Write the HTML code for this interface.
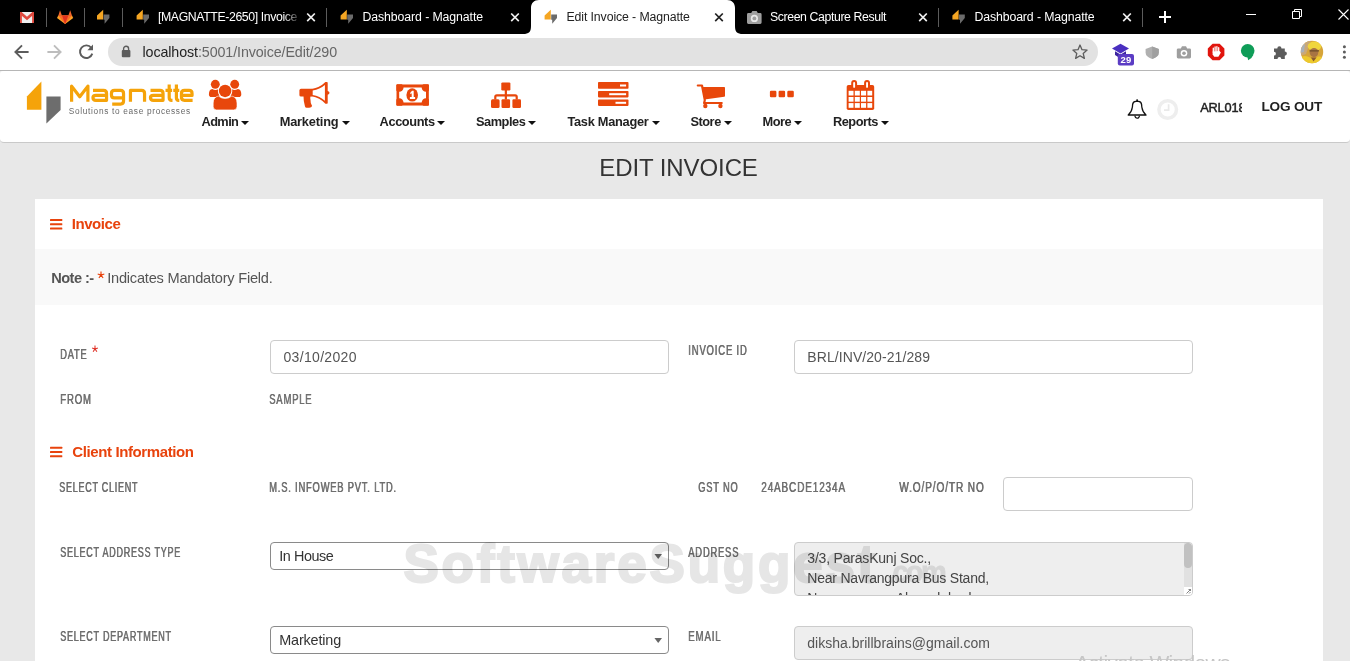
<!DOCTYPE html>
<html><head><meta charset="utf-8">
<style>
*{box-sizing:border-box;margin:0;padding:0}
html,body{width:1350px;height:661px;overflow:hidden;background:#e8e8e8;font-family:"Liberation Sans",sans-serif;}
.a{position:absolute}
.t{position:absolute;white-space:pre;line-height:20px;height:20px;transform-origin:0 50%}
svg{position:absolute;overflow:visible}
#tabbar{position:absolute;left:0;top:0;width:1350px;height:34px;background:#000}
#toolbar{position:absolute;left:0;top:34px;width:1350px;height:37px;background:#fff;border-bottom:1px solid #b6b6b6}
#omni{position:absolute;left:108px;top:38px;width:990px;height:28px;border-radius:14px;background:#e2e2e2}
#nav{position:absolute;left:0;top:71px;width:1350px;height:72px;background:#fff;border-bottom:1px solid #c9c9c9;border-radius:3px 3px 4px 4px}
.sep{position:absolute;top:8px;width:1px;height:19px;background:#5a5a5a}
.car{position:absolute;top:121px;width:0;height:0;border-left:4px solid transparent;border-right:4px solid transparent;border-top:4px solid #111}
#card{position:absolute;left:35px;top:199px;width:1288px;height:470px;background:#fff}
#note{position:absolute;left:35px;top:249px;width:1288px;height:56px;background:#f9f9f9}
.inp{position:absolute;height:34px;border:1px solid #ccc;border-radius:4px;background:#fff}
.sel{position:absolute;height:28px;border:1px solid #8a8a8a;border-radius:4px;background:#fff}
.sel:after{content:"";position:absolute;right:6px;top:11px;width:7.600px;height:5px;background:#666;clip-path:polygon(0 0,100% 0,50% 100%)}
</style></head><body>
<div id="tabbar"></div>
<!--TABS-->
<svg style="left:0;top:0" width="1350" height="34" viewBox="0 0 1350 34">
 <defs>
 </defs>
 <!-- active tab -->
 <path d="M523 34 C529 34 531 32 531 26 L531 8 C531 3 534 0 539 0 L727 0 C732 0 735 3 735 8 L735 26 C735 32 737 34 743 34 Z" fill="#fff"/>
 <!-- separators -->
 <g fill="#5c5c5c"><rect x="46" y="8" width="1" height="19"/><rect x="84" y="8" width="1" height="19"/><rect x="122" y="8" width="1" height="19"/><rect x="326" y="8" width="1" height="19"/><rect x="938" y="8" width="1" height="19"/><rect x="1142" y="8" width="1" height="19"/></g>
 <!-- gmail -->
 <g>
  <rect x="20" y="12" width="14" height="11" fill="#f1f1f1"/>
  <path d="M20 12 L21.600 12 L27 16.700 L32.400 12 L34 12 L34 14.200 L27 20.300 L20 14.200Z" fill="#e04a3f"/>
  <rect x="20" y="12" width="1.900" height="11" fill="#e04a3f"/><rect x="32.100" y="12" width="1.900" height="11" fill="#e04a3f"/>
 </g>
 <!-- gitlab -->
 <g>
  <path d="M65.100 24.100 L57 18 L58.300 15.600 L72 15.600 L73.200 18Z" fill="#fca326"/>
  <path d="M65.100 24.100 L58.300 15.600 L72 15.600Z" fill="#fc6d26"/>
  <path d="M65.100 24.100 L62 15.600 L68.300 15.600Z" fill="#e2331f"/>
  <path d="M58.300 15.800 L60 10.200 L62 15.800Z M68.300 15.800 L70.200 10.200 L72 15.800Z" fill="#f2652a"/>
 </g>
 <g transform="translate(97 9.8)"><path d="M0 5.6 L6.2 0 L6.2 9.6 L0 9.6Z" fill="#f5a623"/><path d="M6.6 4.8 L12.4 4.8 L12.4 8.2 L7.6 13.9 L7.6 9.9 L6.6 9.9Z" fill="#6b6b6b"/></g>
 <g transform="translate(136.6 9.8)"><path d="M0 5.6 L6.2 0 L6.2 9.6 L0 9.6Z" fill="#f5a623"/><path d="M6.6 4.8 L12.4 4.8 L12.4 8.2 L7.6 13.9 L7.6 9.9 L6.6 9.9Z" fill="#6b6b6b"/></g>
 <g transform="translate(340.6 9.8)"><path d="M0 5.6 L6.2 0 L6.2 9.6 L0 9.6Z" fill="#f5a623"/><path d="M6.6 4.8 L12.4 4.8 L12.4 8.2 L7.6 13.9 L7.6 9.9 L6.6 9.9Z" fill="#6b6b6b"/></g>
 <g transform="translate(544.6 9.8)"><path d="M0 5.6 L6.2 0 L6.2 9.6 L0 9.6Z" fill="#f5a623"/><path d="M6.6 4.8 L12.4 4.8 L12.4 8.2 L7.6 13.9 L7.6 9.9 L6.6 9.9Z" fill="#6b6b6b"/></g>
 <g transform="translate(952.4 9.8)"><path d="M0 5.6 L6.2 0 L6.2 9.6 L0 9.6Z" fill="#f5a623"/><path d="M6.6 4.8 L12.4 4.8 L12.4 8.2 L7.6 13.9 L7.6 9.9 L6.6 9.9Z" fill="#6b6b6b"/></g>
 <!-- camera favicon -->
 <g fill="#9e9e9e"><path d="M748.4 13 L751.2 13 L752.4 11 L756.6 11 L757.8 13 L760.2 13 Q761.6 13 761.6 14.4 L761.6 22.6 Q761.6 24 760.2 24 L748.4 24 Q747 24 747 22.6 L747 14.4 Q747 13 748.4 13Z"/></g>
 <circle cx="754.4" cy="18.4" r="3.6" fill="#e8e8e8"/><circle cx="754.4" cy="18.4" r="1.9" fill="#9e9e9e"/>
 <!-- close buttons -->
 <g transform="translate(311 17.3)" stroke="#f0f0f0"><path d="M-3.8 -3.8 L3.8 3.8 M3.8 -3.8 L-3.8 3.8" stroke-width="1.7" fill="none"/></g>
 <g transform="translate(515 17.3)" stroke="#f0f0f0"><path d="M-3.8 -3.8 L3.8 3.8 M3.8 -3.8 L-3.8 3.8" stroke-width="1.7" fill="none"/></g>
 <g transform="translate(719 17.3)" stroke="#222"><path d="M-3.8 -3.8 L3.8 3.8 M3.8 -3.8 L-3.8 3.8" stroke-width="1.7" fill="none"/></g>
 <g transform="translate(923 17.3)" stroke="#f0f0f0"><path d="M-3.8 -3.8 L3.8 3.8 M3.8 -3.8 L-3.8 3.8" stroke-width="1.7" fill="none"/></g>
 <g transform="translate(1127 17.3)" stroke="#f0f0f0"><path d="M-3.8 -3.8 L3.8 3.8 M3.8 -3.8 L-3.8 3.8" stroke-width="1.7" fill="none"/></g>
 <!-- plus -->
 <path d="M1159 17 L1171 17 M1165 11 L1165 23" stroke="#fff" stroke-width="2"/>
 <!-- window controls -->
 <path d="M1246 14.5 L1256 14.5" stroke="#fff" stroke-width="1"/>
 <path d="M1292.5 11.5 L1299.500 11.5 L1299.5 18.5 L1292.5 18.5Z M1294.5 11.5 L1294.5 9.5 L1301.5 9.5 L1301.5 16.5 L1299.5 16.5" stroke="#fff" stroke-width="1" fill="none"/>
 <path d="M1338.5 9.5 L1348.5 19.5 M1348.500 9.5 L1338.5 19.5" stroke="#fff" stroke-width="1.1"/>
 <!-- fade on truncated tab title -->
 <rect x="280" y="8" width="18" height="18" fill="url(#fd)"/>
 <linearGradient id="fd" x1="0" x2="1" y1="0" y2="0"><stop offset="0" stop-color="#000" stop-opacity="0"/><stop offset="1" stop-color="#000" stop-opacity="0.75"/></linearGradient>
</svg>
<!--/TABS-->
<div id="toolbar"></div>
<div id="omni"></div>
<!--TOOLBAR-->
<svg style="left:0;top:34px" width="1350" height="37" viewBox="0 34 1350 37">
 <!-- back -->
 <path d="M28.6 52 L16 52 M22 45.4 L15.4 52 L22 58.6" stroke="#5c5c5c" stroke-width="1.9" fill="none"/>
 <!-- forward -->
 <path d="M47.4 52 L60 52 M54 45.4 L60.6 52 L54 58.600" stroke="#bdbdbd" stroke-width="1.9" fill="none"/>
 <!-- reload -->
 <path d="M91.3 47.8 A6.3 6.3 0 1 0 92.3 53.600" stroke="#5c5c5c" stroke-width="1.9" fill="none"/>
 <path d="M93 44.6 L93 50.2 L87.4 50.2Z" fill="#5c5c5c"/>
 <!-- lock -->
 <rect x="121.8" y="50" width="8.6" height="7.2" rx="1" fill="#5c5c5c"/>
 <path d="M123.600 50.5 L123.600 48.8 A2.5 2.5 0 0 1 128.6 48.8 L128.6 50.5" stroke="#5c5c5c" stroke-width="1.4" fill="none"/>
 <!-- star -->
 <path d="M1080 45 L1082 49.700 L1087.100 50.100 L1083.200 53.400 L1084.400 58.400 L1080 55.700 L1075.600 58.400 L1076.800 53.400 L1072.900 50.100 L1078 49.700Z" stroke="#5c5c5c" stroke-width="1.3" fill="none" stroke-linejoin="round"/>
 <!-- ext 1: grad cap purple -->
 <path d="M1120.5 43.800 L1129 48.600 L1120.500 53.400 L1112 48.600Z" fill="#4a2fc0"/>
 <path d="M1115 51.200 L1120.500 54.400 L1126 51.200 L1126 55 Q1120.500 59.500 1115 55Z" fill="#3b249e"/>
 <rect x="1117.800" y="54" width="16.200" height="11.600" rx="2" fill="#5b3cc4"/>
 <text x="1125.900" y="63.400" font-family="Liberation Sans, sans-serif" font-size="9.500" font-weight="bold" fill="#fff" text-anchor="middle">29</text>
 <!-- shield -->
 <path d="M1152.200 46.600 L1158.800 49 L1158.800 52.600 Q1158.800 57 1152.200 59 Q1145.600 57 1145.600 52.600 L1145.600 49Z" fill="#b0b0b0"/>
 <path d="M1152.200 46.600 L1158.800 49 L1158.800 52.600 Q1158.800 57 1152.200 59Z" fill="#a0a0a0"/>
 <!-- camera -->
 <path d="M1178.200 48.400 L1180.800 48.400 L1182 46.200 L1186 46.200 L1187.200 48.400 L1189.600 48.400 Q1191 48.400 1191 49.800 L1191 57 Q1191 58.400 1189.600 58.400 L1178.200 58.400 Q1176.800 58.400 1176.800 57 L1176.800 49.800 Q1176.800 48.400 1178.200 48.400Z" fill="#9e9e9e"/>
 <circle cx="1184" cy="53.300" r="3.300" fill="#fff"/><circle cx="1184" cy="53.300" r="1.800" fill="#9e9e9e"/>
 <!-- adblock octagon -->
 <path d="M1212.600 43.800 L1219.600 43.800 L1224.400 48.600 L1224.400 55.400 L1219.600 60.200 L1212.600 60.200 L1207.800 55.400 L1207.800 48.600Z" fill="#e1140d"/>
 <path d="M1213.300 52.200 L1213.300 48.200 M1215.100 51.500 L1215.100 46.900 M1216.900 51.500 L1216.900 46.700 M1218.700 51.800 L1218.700 47.700" stroke="#fff" stroke-width="1.300" stroke-linecap="round"/>
 <path d="M1212.600 51.500 L1219.400 51 L1220.900 52.600 L1218.400 56.800 L1214.200 56.800 L1212.600 54.400Z" fill="#fff"/>
 <!-- hangouts -->
 <circle cx="1247.700" cy="50.800" r="6.800" fill="#0f9d58"/>
 <path d="M1247.400 56.500 L1248.100 60.300 Q1252 58.600 1253.600 54.500Z" fill="#0f9d58"/>
 <!-- puzzle -->
 <path d="M1274 48.400 L1277.300 48.400 A2.100 2.100 0 1 1 1281.500 48.400 L1284.800 48.400 L1284.800 51.500 A2.100 2.100 0 1 1 1284.800 55.700 L1284.800 59 L1281.300 59 A1.900 1.900 0 1 0 1277.500 59 L1274 59 L1274 55.600 A1.900 1.900 0 1 0 1274 51.800Z" fill="#5c5c5c"/>
 <!-- avatar -->
 <clipPath id="avc"><circle cx="1312" cy="52" r="11.200"/></clipPath>
 <g clip-path="url(#avc)">
  <rect x="1300" y="40" width="24" height="24" fill="#d6a43a"/>
  <path d="M1300 40 L1311 40 L1306 54 L1300 56Z" fill="#c9a877"/>
  <path d="M1300 46 L1305 44 L1304 52 L1300 53Z" fill="#a9b0b8"/>
  <ellipse cx="1314.500" cy="46.200" rx="6.800" ry="4.600" fill="#f0d63c"/>
  <ellipse cx="1314" cy="52.500" rx="4.300" ry="4.600" fill="#a87443"/>
  <path d="M1309.500 50.300 L1319 50.300 L1319 51.600 L1309.500 51.600Z" fill="#6b4a2a"/>
  <path d="M1300 64 L1300 57.500 Q1305 54.500 1310 57.500 L1313 60 L1318 56.500 Q1322 56 1324 58 L1324 64Z" fill="#edc92c"/>
  <path d="M1311 57.500 L1313.500 61.500 L1316.500 57.500Z" fill="#8a5a30"/>
 </g>
 <!-- kebab -->
 <circle cx="1344.400" cy="46.800" r="1.500" fill="#5c5c5c"/><circle cx="1344.400" cy="52" r="1.500" fill="#5c5c5c"/><circle cx="1344.400" cy="57.200" r="1.500" fill="#5c5c5c"/>
</svg>
<!--/TOOLBAR-->
<div id="nav"></div>
<!--LOGO-->
<svg style="left:0;top:71px" width="200" height="60" viewBox="0 71 200 60">
 <path d="M26.900 96.400 L41.400 81.600 L41.400 109.700 L26.900 109.700Z" fill="#f5a30a"/>
 <path d="M46.400 96.400 L60.600 96.400 L60.600 110 L46.400 123.600Z" fill="#6d6d6d"/>
 <g fill="none" stroke="#f5a30a" stroke-width="3.200" stroke-linejoin="round">
  <path d="M71.600 101.800 L71.600 86.100 L79.750 96.800 L87.900 86.100 L87.900 101.800" stroke-linejoin="round"/>
  <path d="M93 90.450 L103.550 90.450 Q106.550 90.450 106.550 93.450 L106.550 100.350 L95.950 100.350 Q92.950 100.350 92.950 97.800 Q92.950 95.400 95.950 95.400 L106.550 95.400"/>
  <path d="M123.550 97.900 L114.450 97.900 Q111.450 97.900 111.450 95 L111.450 93.450 Q111.450 90.450 114.450 90.450 L120.550 90.450 Q123.550 90.450 123.550 93.450 L123.550 101.050 Q123.550 104.050 120.550 104.050 L112.200 104.050"/>
  <path d="M130.450 101.800 L130.450 90.450 L141.550 90.450 Q144.550 90.450 144.550 93.450 L144.550 101.800"/>
  <path d="M150.500 90.450 L160.050 90.450 Q163.050 90.450 163.050 93.450 L163.050 100.350 L153.450 100.350 Q150.450 100.350 150.450 97.800 Q150.450 95.400 153.450 95.400 L163.050 95.400"/>
  <path d="M169.200 84.500 L169.200 97.800 Q169.200 100.350 171.600 100.350 L172.500 100.350 M165.500 90.450 L172.100 90.450"/>
  <path d="M176.400 84.500 L176.400 97.800 Q176.400 100.350 178.500 100.350 L179.300 100.350 M173.300 90.450 L179.300 90.450"/>
  <path d="M181.450 95.400 L192.050 95.400 L192.050 93.450 Q192.050 90.450 189.050 90.450 L184.450 90.450 Q181.450 90.450 181.450 93.450 L181.450 97.350 Q181.450 100.350 184.450 100.350 L192.600 100.350"/>
 </g>
</svg>
<!--/LOGO-->
<!--NAVICONS-->
<svg style="left:0;top:71px" width="1350" height="72" viewBox="0 71 1350 72">
<g fill="#e8470b">
 <!-- users -->
 <circle cx="215.300" cy="84.300" r="4.450"/><circle cx="234.700" cy="84.300" r="4.450"/>
 <path d="M208.900 94.200 Q208.900 89.400 212.300 88.900 Q215.300 90.800 218.300 89.200 L219.500 97 L211.500 97 Q208.900 97 208.900 94.200Z"/>
 <path d="M241.300 94.200 Q241.300 89.400 237.900 88.900 Q234.700 90.800 231.700 89.200 L230.500 97 L238.700 97 Q241.300 97 241.300 94.200Z"/>
 <circle cx="225.100" cy="90.900" r="7.200" fill="#fff"/>
 <circle cx="225.100" cy="90.900" r="6.250"/>
 <path d="M213.200 106.500 L213.200 103 Q213.200 97.300 218.300 96 Q225.100 101.200 231.900 96 Q237 97.300 237 103 L237 106.500 Q237 109.900 233.600 109.900 L216.600 109.900 Q213.200 109.900 213.200 106.500Z" stroke="#fff" stroke-width="0.600"/>
 <!-- bullhorn -->
 <path d="M301 88.800 L312.300 88.800 L312.300 96.500 L301 96.500 Q299.400 96.500 299.400 94.900 L299.400 90.400 Q299.400 88.800 301 88.800Z"/>
 <path d="M303.500 96 L310.600 96 Q309.900 98 310.500 99.800 Q310.300 103.500 312.100 106 Q311.600 107.800 309.200 107.800 L306.600 107.800 Q305.300 107.800 305 106.400 Q303.400 101 303.500 96Z"/>
 <path d="M311.500 89 Q319.800 87.800 325.400 82.100 L327 82.100 Q327.700 82.100 327.700 82.900 L327.700 90.900 Q329.500 91.300 329.500 92.800 Q329.500 94.300 327.700 94.700 L327.700 102.900 Q327.700 103.700 327 103.700 L325.400 103.700 Q319.800 97.700 311.500 96.300Z"/>
 <path d="M312.700 90.500 Q319.800 89.300 324.900 85 L324.900 100.800 Q319.800 96.300 312.700 95.100Z" fill="#fff"/>
 <!-- money -->
 <clipPath id="mny"><rect x="396.300" y="84.300" width="32.600" height="21.400" rx="0.800"/></clipPath>
 <g clip-path="url(#mny)">
 <rect x="396.300" y="84.300" width="32.600" height="21.400"/>
 <rect x="399.200" y="87.500" width="26.800" height="15" fill="#fff"/>
 <circle cx="399.200" cy="87.500" r="4.300"/><circle cx="426" cy="87.500" r="4.300"/><circle cx="399.200" cy="102.500" r="4.300"/><circle cx="426" cy="102.500" r="4.300"/>
 </g>
 <ellipse cx="412.200" cy="94.900" rx="5.800" ry="6.700"/>
 <path d="M410.300 92.700 L412.100 90.700 L413.700 90.700 L413.700 97.100 L415.100 97.100 L415.100 98.900 L409.900 98.900 L409.900 97.100 L411.700 97.100 L411.700 93.300 L410.300 94.200Z" fill="#fff"/>
 <!-- sitemap -->
 <rect x="501.300" y="82.400" width="9.100" height="8" rx="1.200"/>
 <rect x="491" y="99.300" width="8.600" height="8.700" rx="1.500"/><rect x="501.500" y="99.300" width="8.600" height="8.700" rx="1.200"/><rect x="512.400" y="99.300" width="8.600" height="8.700" rx="1.200"/>
 <path d="M505.850 90 L505.850 99.500 M495.300 99.500 L495.300 96.800 Q495.300 95.300 496.800 95.300 L515.200 95.300 Q516.700 95.300 516.700 96.800 L516.700 99.500" stroke="#e8470b" stroke-width="2.200" fill="none"/>
 <!-- tasks -->
 <rect x="598" y="82.100" width="30.500" height="6.700" rx="0.800"/><rect x="598" y="91" width="30.500" height="6.400" rx="0.800"/><rect x="598" y="99.600" width="30.500" height="6.300" rx="0.800"/>
 <rect x="620" y="84.500" width="6.100" height="2" fill="#fff"/><rect x="609.200" y="93.200" width="16.900" height="2" fill="#fff"/><rect x="615.500" y="101.800" width="10.600" height="2" fill="#fff"/>
 <!-- cart -->
 <path d="M697.800 85.500 L702 85.500 L704.800 100 L704.200 103" stroke="#e8470b" stroke-width="2.200" fill="none" stroke-linecap="round" stroke-linejoin="round"/>
 <path d="M701.800 86.900 L724.200 86.900 Q725 86.900 725 87.700 L725 95.900 Q725 96.600 724.200 96.700 L704.500 99.500Z"/>
 <rect x="703.200" y="101.900" width="19.600" height="2.100" rx="1"/>
 <circle cx="705.300" cy="106" r="2.200"/><circle cx="720.400" cy="106" r="2.200"/>
 <!-- ellipsis -->
 <rect x="769.900" y="90.700" width="6.500" height="6.500" rx="1.200"/><rect x="778.600" y="90.700" width="6.500" height="6.500" rx="1.200"/><rect x="787.300" y="90.700" width="6.500" height="6.500" rx="1.200"/>
 <!-- calendar -->
 <rect x="846.700" y="84.900" width="27.500" height="25.100" rx="1.800"/>
 <g fill="#fff"><rect x="848.600" y="90.800" width="4.900" height="4.700"/><rect x="854.800" y="90.800" width="5.000" height="4.700"/><rect x="861.000" y="90.800" width="5.100" height="4.700"/><rect x="867.400" y="90.800" width="4.800" height="4.700"/><rect x="848.600" y="97.000" width="4.900" height="4.700"/><rect x="854.800" y="97.000" width="5.000" height="4.700"/><rect x="861.000" y="97.000" width="5.100" height="4.700"/><rect x="867.400" y="97.000" width="4.800" height="4.700"/><rect x="848.600" y="103.100" width="4.900" height="4.700"/><rect x="854.800" y="103.100" width="5.000" height="4.700"/><rect x="861.000" y="103.100" width="5.100" height="4.700"/><rect x="867.400" y="103.100" width="4.800" height="4.700"/></g>
 <rect x="851.200" y="80" width="5.900" height="9" rx="2.900"/><rect x="864.100" y="80" width="5.900" height="9" rx="2.900"/>
 <rect x="853.200" y="82" width="1.900" height="5.800" rx="0.900" fill="#fff"/><rect x="866.100" y="82" width="1.900" height="5.800" rx="0.900" fill="#fff"/>
</g>
<!-- bell -->
<g fill="none" stroke="#111" stroke-width="1.300" stroke-linejoin="round">
 <path d="M1128.200 115 Q1131.600 112.300 1132.400 107 L1132.600 104.600 Q1132.900 101.500 1135.800 101.300 L1138.400 101.300 Q1141.300 101.500 1141.600 104.600 L1141.800 107 Q1142.600 112.300 1146 115Z"/>
 <path d="M1134.800 115.600 Q1135.200 118.200 1137.200 118.200 Q1139.200 118.200 1139.500 115.600" stroke-width="1.100"/>
</g>
<circle cx="1137.100" cy="100.200" r="1" fill="#111"/>
<!-- clock -->
<circle cx="1167.700" cy="109.500" r="8.800" fill="none" stroke="#eeeeee" stroke-width="3.500"/>
<path d="M1168.600 104.200 L1168.600 110.200 L1164 110.200" fill="none" stroke="#e9e9e9" stroke-width="1.700"/>
</svg>
<!--/NAVICONS-->
<div class="car" style="left:241px"></div>
<div class="car" style="left:342px"></div>
<div class="car" style="left:437px"></div>
<div class="car" style="left:528px"></div>
<div class="car" style="left:652px"></div>
<div class="car" style="left:724px"></div>
<div class="car" style="left:794px"></div>
<div class="car" style="left:881px"></div>
<div id="card"></div>
<div id="note"></div>
<!--BODYICONS-->
<svg style="left:0;top:199px" width="400" height="300" viewBox="0 199 400 300">
 <g fill="#e8430d">
  <rect x="50" y="219" width="12.300" height="2" rx="0.500"/><rect x="50" y="223.200" width="12.300" height="2" rx="0.500"/><rect x="50" y="227.400" width="12.300" height="2" rx="0.500"/>
  <rect x="50" y="446.800" width="12.300" height="2" rx="0.500"/><rect x="50" y="451" width="12.300" height="2" rx="0.500"/><rect x="50" y="455.200" width="12.300" height="2" rx="0.500"/>
 </g>
 <g stroke="#e8430d" stroke-width="1.150" stroke-linecap="butt">
  <path d="M101 271.600 L101 275.100 M101 275.100 L97.700 274 M101 275.100 L104.300 274 M101 275.100 L98.900 278 M101 275.100 L103.100 278"/>
 </g>
 <g stroke="#e0362c" stroke-width="1.050">
  <path d="M95 345.600 L95 348.900 M95 348.900 L92.100 347.900 M95 348.900 L97.900 347.900 M95 348.900 L93.100 351.700 M95 348.900 L96.900 351.700"/>
 </g>
</svg>
<!--/BODYICONS-->
<div class="inp" style="left:270px;top:340px;width:399px"></div>
<div class="inp" style="left:794px;top:340px;width:399px"></div>
<div class="inp" style="left:1003px;top:477px;width:190px"></div>
<div class="sel" style="left:270px;top:542px;width:399px"></div>
<div class="sel" style="left:270px;top:626px;width:399px"></div>
<div class="inp" style="left:794px;top:542px;width:399px;height:54px;background:#eee;overflow:hidden">
  <div class="a" style="right:0;top:0;width:8px;height:53px;background:#e1e1e1"></div>
  <div class="a" style="right:0;top:0;width:8px;height:25px;border-radius:4px;background:#c1c1c1"></div>
  <div class="a" style="right:0;bottom:0;width:8px;height:8px;background:#fff"></div>
  <svg style="right:0;bottom:0" width="8" height="8" viewBox="0 0 8 8"><path d="M6.500 2.500 L2.500 6.500 M6.500 5 L5 6.500 M4.500 2.500 L6.500 2.500 L6.500 4" stroke="#666" stroke-width="0.800" fill="none"/></svg>
</div>
<div class="inp" style="left:794px;top:626px;width:399px;background:#eee"></div>

<div class="t" style="left:158.00px;top:7.00px;font-size:12.3px;color:#fff;letter-spacing:-0.395px;">[MAGNATTE-2650] Invoice</div>
<div class="t" style="left:362.50px;top:7.00px;font-size:12.3px;color:#fff;letter-spacing:-0.093px;">Dashboard - Magnatte</div>
<div class="t" style="left:566.50px;top:7.00px;font-size:12.3px;color:#222;letter-spacing:-0.108px;">Edit Invoice - Magnatte</div>
<div class="t" style="left:770.00px;top:7.00px;font-size:12.3px;color:#fff;letter-spacing:-0.400px;">Screen Capture Result</div>
<div class="t" style="left:974.40px;top:7.00px;font-size:12.3px;color:#fff;letter-spacing:-0.108px;">Dashboard - Magnatte</div>
<div class="t" style="left:142.50px;top:42.00px;font-size:14.3px;color:#222;letter-spacing:-0.110px;">localhost<span style="color:#666">:5001/Invoice/Edit/290</span></div>
<div class="t" style="left:201.50px;top:112.00px;font-size:12.8px;color:#222;font-weight:bold;letter-spacing:-0.602px;">Admin</div>
<div class="t" style="left:279.70px;top:112.00px;font-size:12.8px;color:#222;font-weight:bold;letter-spacing:-0.195px;">Marketing</div>
<div class="t" style="left:379.60px;top:112.00px;font-size:12.8px;color:#222;font-weight:bold;letter-spacing:-0.402px;">Accounts</div>
<div class="t" style="left:476.00px;top:112.00px;font-size:12.8px;color:#222;font-weight:bold;letter-spacing:-0.477px;">Samples</div>
<div class="t" style="left:567.40px;top:112.00px;font-size:12.8px;color:#222;font-weight:bold;letter-spacing:-0.267px;">Task Manager</div>
<div class="t" style="left:690.40px;top:112.00px;font-size:12.8px;color:#222;font-weight:bold;letter-spacing:-0.464px;">Store</div>
<div class="t" style="left:762.50px;top:112.00px;font-size:12.8px;color:#222;font-weight:bold;letter-spacing:-0.470px;">More</div>
<div class="t" style="left:832.90px;top:112.00px;font-size:12.8px;color:#222;font-weight:bold;letter-spacing:-0.466px;">Reports</div>
<div class="t" style="left:1200.20px;top:98.00px;font-size:12.8px;color:#222;letter-spacing:-0.175px;width:42px;overflow:hidden;-webkit-text-stroke:0.45px #222;">ARL018</div>
<div class="t" style="left:1261.50px;top:97.00px;font-size:13.6px;color:#222;font-weight:bold;letter-spacing:-0.205px;">LOG OUT</div>
<div class="t" style="left:599.30px;top:158.00px;font-size:24px;color:#333;letter-spacing:-0.091px;">EDIT INVOICE</div>
<div class="t" style="left:71.80px;top:214.00px;font-size:15px;color:#e8430d;font-weight:bold;letter-spacing:-0.455px;">Invoice</div>
<div class="t" style="left:72.30px;top:442.00px;font-size:15px;color:#e8430d;font-weight:bold;letter-spacing:-0.390px;">Client Information</div>
<div class="t" style="left:51.30px;top:268.00px;font-size:14.6px;color:#555;letter-spacing:-0.574px;"><b>Note :-</b></div>
<div class="t" style="left:107.20px;top:268.00px;font-size:14.6px;color:#555;letter-spacing:-0.221px;">Indicates Mandatory Field.</div>
<div class="t" style="left:59.50px;top:344.00px;font-size:15.2px;color:#6e6e6e;transform:scaleX(0.6100);letter-spacing:1.3px;text-shadow:0.8px 0 0 #6e6e6e;">DATE</div>
<div class="t" style="left:688.40px;top:340.00px;font-size:15.2px;color:#6e6e6e;transform:scaleX(0.6263);letter-spacing:1.3px;text-shadow:0.8px 0 0 #6e6e6e;">INVOICE ID</div>
<div class="t" style="left:59.50px;top:389.00px;font-size:15.2px;color:#6e6e6e;transform:scaleX(0.6314);letter-spacing:1.3px;text-shadow:0.8px 0 0 #6e6e6e;">FROM</div>
<div class="t" style="left:268.90px;top:389.00px;font-size:15.2px;color:#6e6e6e;transform:scaleX(0.6224);letter-spacing:1.3px;text-shadow:0.8px 0 0 #6e6e6e;">SAMPLE</div>
<div class="t" style="left:59.40px;top:477.00px;font-size:15.2px;color:#6e6e6e;transform:scaleX(0.5896);letter-spacing:1.3px;text-shadow:0.8px 0 0 #6e6e6e;">SELECT CLIENT</div>
<div class="t" style="left:269.10px;top:477.00px;font-size:15.2px;color:#6e6e6e;transform:scaleX(0.6163);letter-spacing:1.3px;text-shadow:0.8px 0 0 #6e6e6e;">M.S. INFOWEB PVT. LTD.</div>
<div class="t" style="left:698.20px;top:477.00px;font-size:15.2px;color:#6e6e6e;transform:scaleX(0.6113);letter-spacing:1.3px;text-shadow:0.8px 0 0 #6e6e6e;">GST NO</div>
<div class="t" style="left:760.90px;top:477.00px;font-size:15.2px;color:#6e6e6e;transform:scaleX(0.6575);letter-spacing:1.3px;text-shadow:0.8px 0 0 #6e6e6e;">24ABCDE1234A</div>
<div class="t" style="left:898.50px;top:477.00px;font-size:15.2px;color:#6e6e6e;transform:scaleX(0.6655);letter-spacing:1.3px;text-shadow:0.8px 0 0 #6e6e6e;">W.O/P/O/TR NO</div>
<div class="t" style="left:59.50px;top:542.00px;font-size:15.2px;color:#6e6e6e;transform:scaleX(0.5927);letter-spacing:1.3px;text-shadow:0.8px 0 0 #6e6e6e;">SELECT ADDRESS TYPE</div>
<div class="t" style="left:688.10px;top:542.00px;font-size:15.2px;color:#6e6e6e;transform:scaleX(0.6180);letter-spacing:1.3px;text-shadow:0.8px 0 0 #6e6e6e;">ADDRESS</div>
<div class="t" style="left:59.50px;top:626.00px;font-size:15.2px;color:#6e6e6e;transform:scaleX(0.5923);letter-spacing:1.3px;text-shadow:0.8px 0 0 #6e6e6e;">SELECT DEPARTMENT</div>
<div class="t" style="left:688.10px;top:626.00px;font-size:15.2px;color:#6e6e6e;transform:scaleX(0.6381);letter-spacing:1.3px;text-shadow:0.8px 0 0 #6e6e6e;">EMAIL</div>
<div class="t" style="left:283.50px;top:347.00px;font-size:14px;color:#555;letter-spacing:0.322px;">03/10/2020</div>
<div class="t" style="left:807.30px;top:347.00px;font-size:14px;color:#555;letter-spacing:0.076px;">BRL/INV/20-21/289</div>
<div class="t" style="left:279.30px;top:546.00px;font-size:14.4px;color:#333;letter-spacing:-0.439px;">In House</div>
<div class="t" style="left:279.30px;top:630.00px;font-size:14.4px;color:#333;letter-spacing:-0.165px;">Marketing</div>
<div class="t" style="left:68.80px;top:101.00px;font-size:8.3px;color:#686868;letter-spacing:0.675px;">Solutions to ease processes</div>
<div class="t" style="left:403.50px;top:554.00px;font-size:53px;color:#e6e6e6;font-weight:bold;letter-spacing:2.773px;mix-blend-mode:multiply;-webkit-text-stroke:2.1px #e6e6e6;">SoftwareSuggest</div>
<div class="t" style="left:887.00px;top:562.00px;font-size:29px;color:#e6e6e6;font-weight:bold;letter-spacing:-2.672px;mix-blend-mode:multiply;-webkit-text-stroke:0.8px #e6e6e6;">.com</div>
<div class="t" style="left:807.30px;top:548.00px;font-size:14px;color:#444;letter-spacing:-0.197px;">3/3, ParasKunj Soc.,</div>
<div class="t" style="left:807.30px;top:568.00px;font-size:14px;color:#444;letter-spacing:-0.217px;">Near Navrangpura Bus Stand,</div>
<div class="t" style="left:807.30px;top:633.00px;font-size:14px;color:#555;letter-spacing:0.015px;">diksha.brillbrains@gmail.com</div>
<div class="t" style="left:1075.20px;top:653.00px;font-size:21px;color:#c6c6c6;letter-spacing:-0.696px;">Activate Windows</div>
<div class="t" style="left:807.30px;top:588.00px;font-size:14px;color:#444;letter-spacing:0.034px;clip-path:inset(0 0 13px 0);">Navrangpura, Ahmedabad</div>
<!--OVERLAY-->
<div class="a" style="left:283px;top:8px;width:15px;height:18px;background:linear-gradient(90deg,rgba(0,0,0,0),rgba(0,0,0,0.8))"></div>
<!--/OVERLAY-->
</body></html>
